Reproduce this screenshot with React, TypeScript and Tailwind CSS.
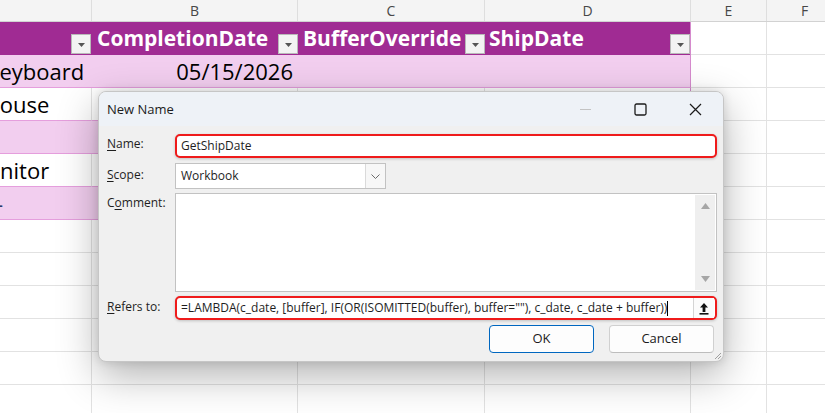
import React from "react";

const COLS = [
  { key: "A", w: "w-[92px]" },
  { key: "B", w: "w-[206px]" },
  { key: "C", w: "w-[187px]" },
  { key: "D", w: "w-[206px]" },
  { key: "E", w: "w-[76px]" },
  { key: "F", w: "w-[76px]" },
];

const ROWS = [
  { band: true, a: "Keyboard", off: "-ml-[14px]", b: "05/15/2026" },
  { band: false, a: "Mouse", off: "-ml-[20px]" },
  { band: true, a: "", off: "" },
  { band: false, a: "Monitor", off: "-ml-[33px]" },
  { band: true, a: "-", off: "-ml-[4px]" },
];

function FilterButton() {
  return (
    <div className="w-[20px] h-[20px] self-end mb-[1px] bg-[#f3f3f3] border border-[#b9b9b9] flex items-end justify-center pb-[6px] shrink-0">
      <svg width="7" height="4" viewBox="0 0 7 4">
        <path d="M0 0h7L3.5 4z" fill="#555" />
      </svg>
    </div>
  );
}

function Sheet() {
  return (
    <div className="flex flex-col">
      {/* column letters; column A is scrolled so its letter is off screen */}
      <div className="flex h-[22px] bg-[#f4f4f4] border-b border-[#d2d2d2]">
        {COLS.map((c) => (
          <div
            key={c.key}
            className={`${c.w} shrink-0 border-r border-[#dedede] flex items-center justify-center text-[14px] text-[#474747]`}
          >
            {c.key === "A" ? "" : c.key}
          </div>
        ))}
      </div>

      {/* table header */}
      <div className="flex h-[33px] text-white font-bold text-[21px]">
        <div className="w-[92px] shrink-0 bg-[#a02b93] flex justify-end pr-[1px]">
          <FilterButton />
        </div>
        <div className="w-[206px] shrink-0 bg-[#a02b93] flex items-center pl-[5px]">
          <span className="flex-1 leading-none">CompletionDate</span>
          <FilterButton />
        </div>
        <div className="w-[187px] shrink-0 bg-[#a02b93] flex items-center pl-[5px]">
          <span className="flex-1 leading-none">BufferOverride</span>
          <FilterButton />
        </div>
        <div className="w-[206px] shrink-0 bg-[#a02b93] flex items-center pl-[4px] border-r border-r-[#d58acd]">
          <span className="flex-1 leading-none">ShipDate</span>
          <FilterButton />
        </div>
        <div className="w-[76px] shrink-0 border-r border-b border-[#e2e2e2]" />
        <div className="w-[76px] shrink-0 border-r border-b border-[#e2e2e2]" />
      </div>

      {/* table body */}
      {ROWS.map((r, i) => {
        const fill = r.band ? "bg-[#f2ceef]" : "bg-white border-r border-r-[#e2e2e2]";
        return (
          <div key={i} className="flex h-[33px] text-[22px] text-black">
            <div className={`w-[92px] shrink-0 overflow-hidden flex items-center border-b border-b-[#e59edd] ${fill}`}>
              <span className={`whitespace-nowrap ${r.off} ${r.a === "-" ? "text-[#2b3a67]" : ""}`}>{r.a}</span>
            </div>
            <div className={`w-[206px] shrink-0 flex items-center justify-end pr-[5px] border-b border-b-[#e59edd] ${fill}`}>
              {r.b}
            </div>
            <div className={`w-[187px] shrink-0 border-b border-b-[#e59edd] ${fill}`} />
            <div className={`w-[206px] shrink-0 border-b border-b-[#e59edd] border-r border-r-[#d58acd] ${r.band ? "bg-[#f2ceef]" : "bg-white"}`} />
            <div className="w-[76px] shrink-0 border-r border-b border-[#e2e2e2]" />
            <div className="w-[76px] shrink-0 border-r border-b border-[#e2e2e2]" />
          </div>
        );
      })}

      {/* empty rows */}
      {[0, 1, 2, 3, 4, 5].map((i) => (
        <div key={i} className="flex h-[33px]">
          {COLS.map((c) => (
            <div key={c.key} className={`${c.w} shrink-0 border-r border-b border-[#e2e2e2]`} />
          ))}
        </div>
      ))}
    </div>
  );
}

function Label({ k, rest, pre = "", pt }: { k: string; rest: string; pre?: string; pt: string }) {
  return (
    <div className={`w-[68px] shrink-0 text-[12px] leading-[16px] text-[#1e1e1e] ${pt}`}>
      {pre}
      <span className="underline underline-offset-[2px]">{k}</span>
      {rest}
    </div>
  );
}

function Dialog() {
  return (
    <div className="absolute left-[98px] top-[91px] w-[626px] h-[271px] rounded-[8px] border border-[#c6c6c6] bg-[#f0f0f0] overflow-hidden flex flex-col shadow-[0_14px_40px_rgba(0,0,0,0.3),0_0_10px_rgba(0,0,0,0.12)]">
      {/* title bar */}
      <div className="h-[34px] shrink-0 bg-[#eef2f7] flex items-center">
        <span className="flex-1 pl-[8px] pt-[1px] text-[13px] text-[#1b1b1b]">New Name</span>
        <div className="flex h-full">
          <div className="w-[55px] flex items-center justify-center">
            <span className="w-[11px] h-px bg-[#c3c3c3]" />
          </div>
          <div className="w-[55px] flex items-center justify-center">
            <svg width="13" height="13" viewBox="0 0 13 13">
              <rect x="1" y="1" width="11" height="11" rx="1.5" fill="none" stroke="#1b1b1b" strokeWidth="1.3" />
            </svg>
          </div>
          <div className="w-[55px] flex items-center justify-center">
            <svg width="13" height="13" viewBox="0 0 13 13">
              <path d="M1 1l11 11M12 1L1 12" stroke="#1b1b1b" strokeWidth="1.2" />
            </svg>
          </div>
        </div>
      </div>

      {/* body */}
      <div className="flex flex-col pl-[8px] pr-[6px] pt-[8px] text-[#1e1e1e]">
        <div className="flex h-[24px]">
          <Label k="N" rest="ame:" pt="pt-[2px]" />
          <div className="flex-1 flex items-center bg-white border-2 border-[#ef1b1b] rounded-[5px] pl-[4px] text-[12px] shadow-[0_1px_3px_rgba(0,0,0,0.2)]">
            GetShipDate
          </div>
        </div>

        <div className="flex h-[26px] mt-[5px]">
          <Label k="S" rest="cope:" pt="pt-[4px]" />
          <div className="w-[211px] flex bg-white border border-[#c2c2c2] text-[12px]">
            <span className="flex-1 flex items-center pl-[5px]">Workbook</span>
            <span className="w-[20px] flex items-center justify-center bg-[#f7f7f7] border-l border-[#dadada]">
              <svg width="9" height="5" viewBox="0 0 9 5">
                <path d="M0.5 0.5l4 4 4-4" fill="none" stroke="#6b6b6b" strokeWidth="1" />
              </svg>
            </span>
          </div>
        </div>

        <div className="flex h-[99px] mt-[4px]">
          <Label pre="C" k="o" rest="mment:" pt="pt-[2px]" />
          <div className="flex-1 flex justify-end bg-white border border-[#c2c2c2] p-[1px]">
            <div className="w-[20px] bg-[#efefef] flex flex-col items-center justify-between pt-[8px] pb-[8px]">
              <svg width="9" height="6" viewBox="0 0 9 6">
                <path d="M4.5 0L9 6H0z" fill="#a6a6a6" />
              </svg>
              <svg width="9" height="6" viewBox="0 0 9 6">
                <path d="M0 0h9L4.5 6z" fill="#a6a6a6" />
              </svg>
            </div>
          </div>
        </div>

        <div className="flex h-[24px] mt-[4px]">
          <Label k="R" rest="efers to:" pt="pt-[3px]" />
          <div className="flex-1 flex bg-white border-2 border-[#ef1b1b] rounded-[5px] text-[12px] shadow-[0_1px_3px_rgba(0,0,0,0.2)] pr-[1px]">
            <div className="flex-1 flex items-center pl-[4px] whitespace-nowrap overflow-hidden">
              <span>=LAMBDA(c_date, [buffer], IF(OR(ISOMITTED(buffer), buffer=""), c_date, c_date + buffer))</span>
              <span className="w-px h-[15px] bg-black" />
            </div>
            <div className="w-[21px] flex items-center justify-center border-l border-[#d4d4d4] bg-[#fbfbfb]">
              <svg width="10" height="13" viewBox="0 0 10 13">
                <path d="M5 1L1 5.5h2.6V10h2.8V5.5H9z" fill="#111" />
                <rect x="0.5" y="11" width="9" height="1.6" fill="#111" />
              </svg>
            </div>
          </div>
        </div>

        <div className="flex justify-end gap-[15px] pr-[3px] mt-[5px]">
          <button className="w-[105px] h-[28px] rounded-[4px] border border-[#0067c0] bg-[#fdfdfd] text-[13px] text-[#1b1b1b]">
            OK
          </button>
          <button className="w-[105px] h-[28px] rounded-[4px] border border-[#d0d0d0] border-b-[#bdbdbd] bg-[#fdfdfd] text-[13px] text-[#1b1b1b]">
            Cancel
          </button>
        </div>
      </div>

      {/* resize grip */}
      <svg className="absolute right-[1px] bottom-[1px]" width="9" height="9" viewBox="0 0 9 9">
        <path d="M8 2L2 8M8 5L5 8" stroke="#a0a0a0" strokeWidth="1" />
      </svg>
    </div>
  );
}

export default function App() {
  return (
    <div className="relative w-[825px] h-[413px] overflow-hidden bg-white font-['Open_Sans',sans-serif]">
      <Sheet />
      <Dialog />
    </div>
  );
}
